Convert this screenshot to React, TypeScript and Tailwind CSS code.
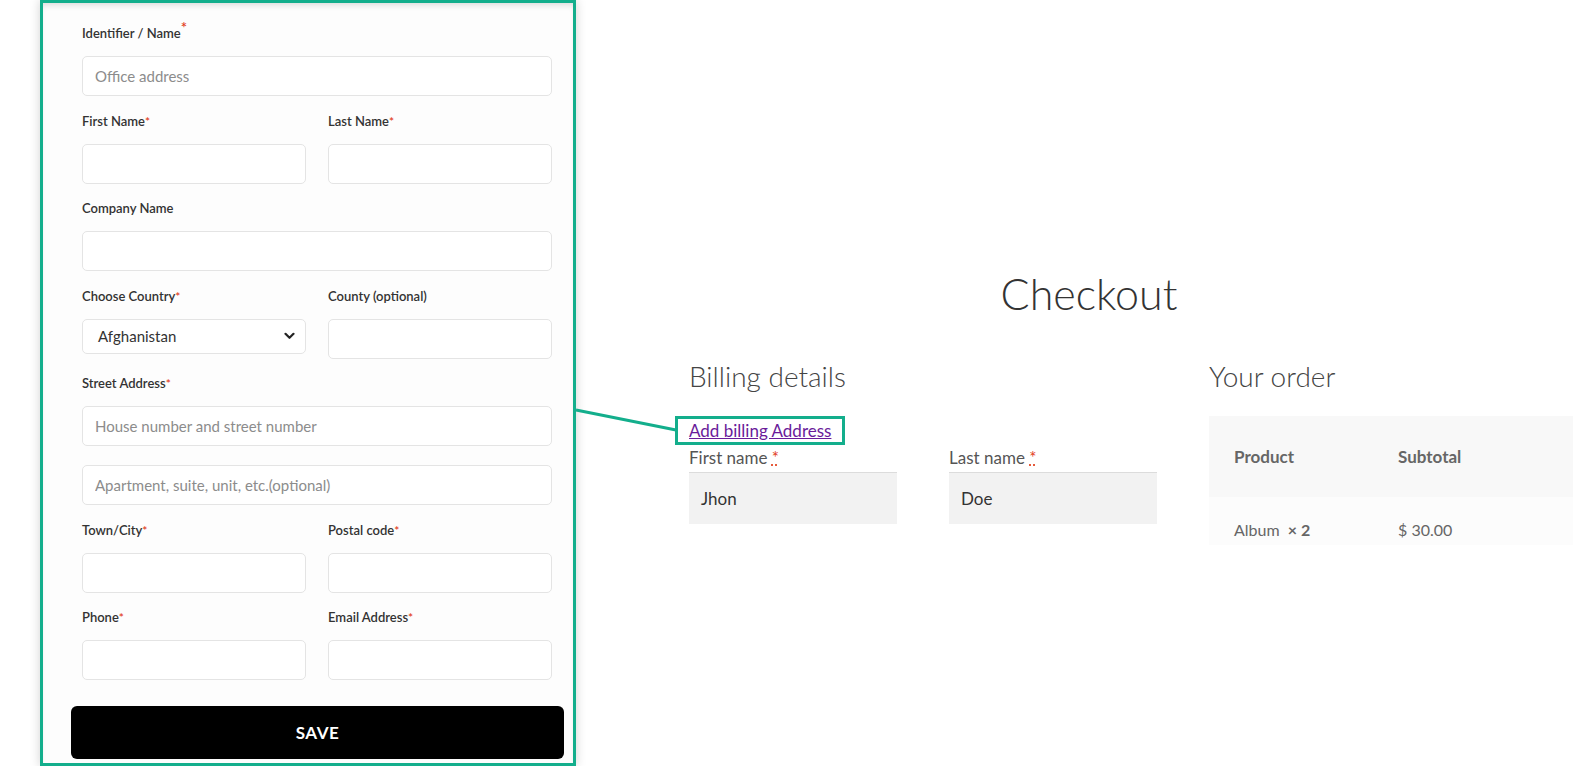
import type { ReactNode } from "react"

const RED = "text-[#e2401c]"

function Label({ children, req, sup }: { children: ReactNode; req?: boolean; sup?: boolean }) {
  return (
    <div className="h-[20px] text-[13px] leading-[20px] font-semibold text-[#333]">
      {children}
      {req && sup && <sup className={`${RED} text-[15px] top-[-5px] relative align-baseline`}>*</sup>}
      {req && !sup && <span className={`${RED} text-[12px]`}>*</span>}
    </div>
  )
}

function Input({ placeholder }: { placeholder?: string }) {
  return (
    <input
      placeholder={placeholder}
      className="block w-full h-[40px] rounded-[5px] border border-[#e4e4e4] bg-white px-[12px] text-[15px] text-[#333] placeholder:text-[#8c8c8c] outline-none"
    />
  )
}

function Field({ label, req, sup, children }: { label: string; req?: boolean; sup?: boolean; children: ReactNode }) {
  return (
    <div className="mb-[14.5px]">
      <Label req={req} sup={sup}>
        {label}
      </Label>
      <div className="mt-[13px]">{children}</div>
    </div>
  )
}

function AddressForm() {
  return (
    <div className="shrink-0 ml-[40px] w-[536px] h-[766px] border-[3px] border-[#13ae8c] bg-[#fdfdfd] shadow-[0_0_10px_rgba(0,0,0,0.18),inset_0_5px_6px_-3px_rgba(0,0,0,0.14)] pt-[20px] pl-[28px]">
      <div className="w-[493px]">
        <div className="pl-[11px] pr-[12px]">
          <Field label="Identifier / Name" req sup>
            <Input placeholder="Office address" />
          </Field>
          <div className="grid grid-cols-2 gap-x-[22px]">
            <Field label="First Name" req>
              <Input />
            </Field>
            <Field label="Last Name" req>
              <Input />
            </Field>
          </div>
          <Field label="Company Name">
            <Input />
          </Field>
          <div className="grid grid-cols-2 gap-x-[22px]">
            <Field label="Choose Country" req>
              <div className="flex h-[35px] items-center justify-between rounded-[5px] border border-[#e4e4e4] bg-white pl-[15px] pr-[10px] text-[15px] text-[#333]">
                <span>Afghanistan</span>
                <svg width="11" height="8" viewBox="0 0 11 8" fill="none">
                  <path d="M1.5 1.8l4 4 4-4" stroke="#222" strokeWidth="2.2" strokeLinecap="round" strokeLinejoin="round" />
                </svg>
              </div>
            </Field>
            <Field label="County (optional)">
              <Input />
            </Field>
          </div>
          <Field label="Street Address" req>
            <Input placeholder="House number and street number" />
            <div className="mt-[19px]">
              <Input placeholder="Apartment, suite, unit, etc.(optional)" />
            </div>
          </Field>
          <div className="grid grid-cols-2 gap-x-[22px]">
            <Field label="Town/City" req>
              <Input />
            </Field>
            <Field label="Postal code" req>
              <Input />
            </Field>
          </div>
          <div className="grid grid-cols-2 gap-x-[22px]">
            <Field label="Phone" req>
              <Input />
            </Field>
            <Field label="Email Address" req>
              <Input />
            </Field>
          </div>
        </div>
        <button className="mt-[11.5px] flex h-[53px] w-full items-center justify-center rounded-[6px] bg-black text-[17px] font-bold tracking-[0.5px] text-white">
          SAVE
        </button>
      </div>
    </div>
  )
}

function BillingLabel({ text }: { text: string }) {
  return (
    <div className="h-[27px] text-[17px] leading-[26px] text-[#555]">
      {text} <span className={`${RED} underline decoration-dotted`}>*</span>
    </div>
  )
}

function Checkout() {
  return (
    <div className="pl-[113px]">
      <div className="w-[800px] pt-[266px] text-center text-[43px] leading-[56px] font-light text-[#333]">Checkout</div>
      <div className="mt-[36px] flex">
        <div className="w-[468px]">
          <h2 className="text-[28px] leading-[36px] font-light text-[#444]">Billing details</h2>
          <div className="mt-[22px]">
            <span className="-ml-[14px] inline-block border-[3px] border-[#13ae8c] px-[11px] text-[17px] leading-[23px] text-[#6a1b9a] underline">
              Add billing Address
            </span>
          </div>
          <div className="grid grid-cols-2 gap-x-[52px]">
            <div>
              <BillingLabel text="First name" />
              <div className="flex h-[52px] items-center border-t border-[#dcdcdc] bg-[#f2f2f2] px-[12px] text-[17px] text-[#333]">Jhon</div>
            </div>
            <div>
              <BillingLabel text="Last name" />
              <div className="flex h-[52px] items-center border-t border-[#dcdcdc] bg-[#f2f2f2] px-[12px] text-[17px] text-[#333]">Doe</div>
            </div>
          </div>
        </div>
        <div className="ml-[52px] w-[364px]">
          <h2 className="text-[28px] leading-[36px] font-light text-[#444]">Your order</h2>
          <div className="mt-[22px]">
            <div className="flex h-[81px] items-center bg-[#f8f8f8] px-[25px] text-[17px] font-bold text-[#666]">
              <span className="w-[164px]">Product</span>
              <span>Subtotal</span>
            </div>
            <div className="flex h-[48px] items-end bg-[#fcfcfc] px-[25px] pb-[3px] text-[16px] leading-[24px] text-[#666]">
              <span className="w-[164px]">
                Album&nbsp; <strong>× 2</strong>
              </span>
              <span>$ 30.00</span>
            </div>
          </div>
        </div>
      </div>
    </div>
  )
}

export default function App() {
  return (
    <div className="relative flex h-[766px] w-[1582px] overflow-hidden bg-white font-['Lato',sans-serif]">
      <AddressForm />
      <Checkout />
      {/* connector from the form to the link */}
      <svg className="pointer-events-none absolute left-0 top-0" width="1582" height="766">
        <line x1="576" y1="410" x2="676" y2="430" stroke="#13ae8c" strokeWidth="3" />
      </svg>
    </div>
  )
}
